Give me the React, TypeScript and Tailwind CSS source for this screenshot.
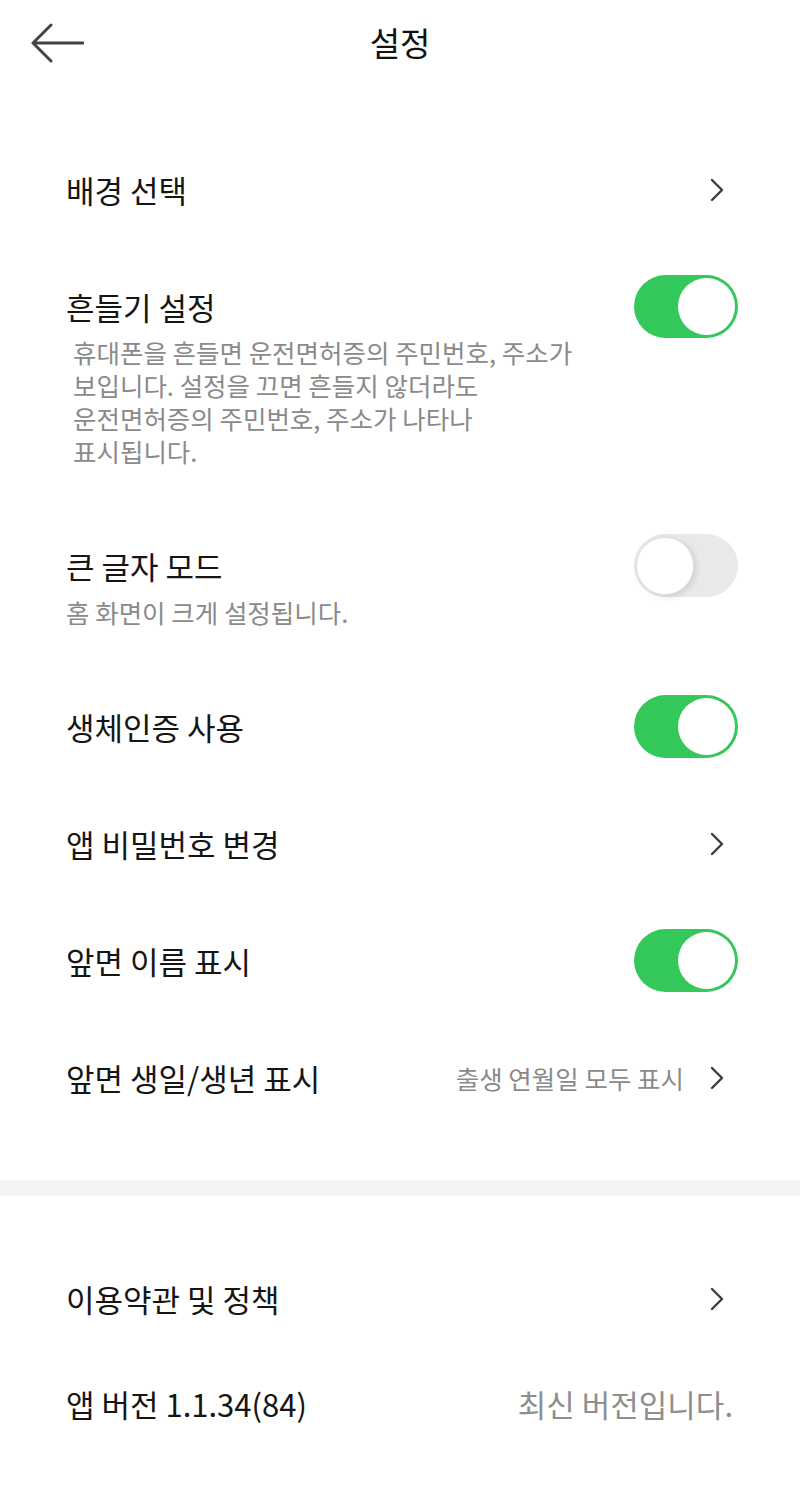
import type { ReactNode } from "react";

const font = {
  fontFamily: '"Noto Sans CJK KR", "Noto Sans", sans-serif',
};

function BackArrow() {
  return (
    <svg width="54" height="40" viewBox="0 0 54 40" fill="none">
      <path
        d="M3 20H53M21 2L3 20L21 38"
        stroke="#444444"
        strokeWidth="3"
        strokeLinecap="round"
        strokeLinejoin="round"
      />
    </svg>
  );
}

function Chevron() {
  return (
    <svg width="14" height="24" viewBox="0 0 14 24" fill="none" className="mr-[14px]">
      <path
        d="M2 2L12 12L2 22"
        stroke="#3c3c3c"
        strokeWidth="2.4"
        strokeLinecap="round"
        strokeLinejoin="round"
      />
    </svg>
  );
}

function Toggle({ on }: { on: boolean }) {
  if (on) {
    return (
      <div className="flex h-[63px] w-[104px] shrink-0 items-center justify-end rounded-full bg-[#34c759] p-[3px]">
        <div className="h-[57px] w-[57px] rounded-full bg-white" />
      </div>
    );
  }

  return (
    <div className="flex h-[63px] w-[104px] shrink-0 items-center justify-start rounded-full bg-[#e9e9eb] p-[2px]">
      <div className="h-[58px] w-[58px] rounded-full border border-[#e2e2e2] bg-white shadow-[2px_2px_6px_rgba(0,0,0,0.12)]" />
    </div>
  );
}

type RowProps = {
  title: string;
  trailing?: ReactNode;
  children?: ReactNode;
  className?: string;
};

function Row({ title, trailing, children, className = "py-[40px]" }: RowProps) {
  return (
    <div className={`pl-[66px] pr-[62px] ${className}`}>
      <div className="flex h-[37px] items-center justify-between">
        <span className="whitespace-nowrap text-[31px] leading-[37px] text-[#151515]">
          {title}
        </span>
        {trailing}
      </div>
      {children}
    </div>
  );
}

export default function App() {
  return (
    <div className="min-h-[1506px] w-full bg-white" style={font}>
      <header className="grid h-[84px] grid-cols-[1fr_auto_1fr] items-center">
        <div className="pl-[30px] pt-[1px]">
          <BackArrow />
        </div>
        <h1 className="text-[33px] font-normal leading-none text-[#111111]">설정</h1>
        <div />
      </header>

      <div className="pt-[47px]">
        <Row title="배경 선택" trailing={<Chevron />} />

        <Row title="흔들기 설정" trailing={<Toggle on />}>
          <p className="mt-[10px] whitespace-nowrap pl-[7px] text-[25.5px] leading-[33px] text-[#8a8a8a]">
            휴대폰을 흔들면 운전면허증의 주민번호, 주소가
            <br />
            보입니다. 설정을 끄면 흔들지 않더라도
            <br />
            운전면허증의 주민번호, 주소가 나타나
            <br />
            표시됩니다.
          </p>
        </Row>

        <Row title="큰 글자 모드" trailing={<Toggle on={false} />}>
          <p className="mt-[11px] text-[25.5px] leading-[33px] text-[#8a8a8a]">
            홈 화면이 크게 설정됩니다.
          </p>
        </Row>

        <Row title="생체인증 사용" trailing={<Toggle on />} />
        <Row title="앱 비밀번호 변경" trailing={<Chevron />} />
        <Row title="앞면 이름 표시" trailing={<Toggle on />} />
        <Row
          title="앞면 생일/생년 표시"
          trailing={
            <div className="flex items-center gap-[26px]">
              <span className="whitespace-nowrap text-[25.5px] leading-[33px] text-[#8a8a8a]">
                출생 연월일 모두 표시
              </span>
              <Chevron />
            </div>
          }
        />

        <div className="mt-[44px] h-[16px] bg-[#f2f3f5]" />

        <div className="pt-[44px]">
          <Row title="이용약관 및 정책" trailing={<Chevron />} />
          <Row
            title="앱 버전 1.1.34(84)"
            className="pt-[28px] pb-[40px]"
            trailing={
              <span className="mr-[5px] whitespace-nowrap text-[31px] leading-[37px] text-[#8e8e8e]">
                최신 버전입니다.
              </span>
            }
          />
        </div>
      </div>
    </div>
  );
}
